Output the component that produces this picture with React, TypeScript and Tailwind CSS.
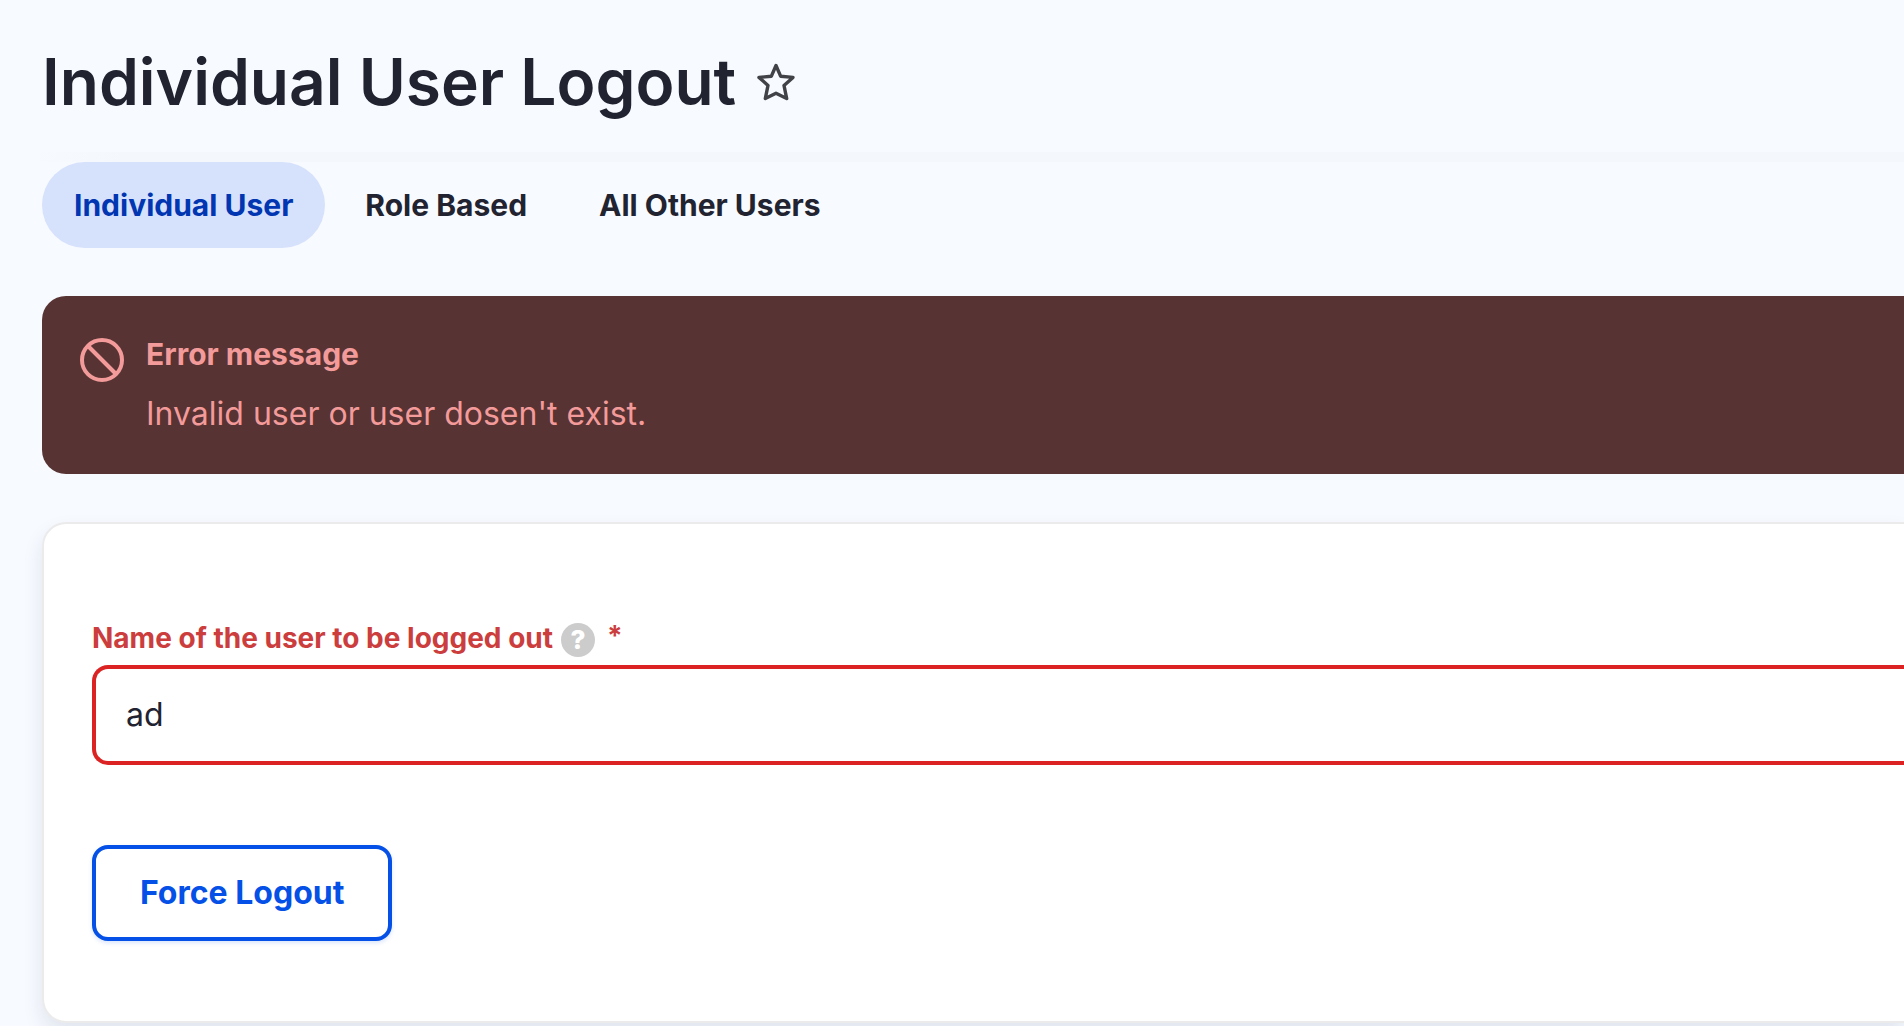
import React from "react";

const tabs = ["Individual User", "Role Based", "All Other Users"];

function StarIcon() {
  return (
    <svg viewBox="0 0 40 40" className="size-10" fill="none" stroke="#414247" strokeWidth="3.4" strokeLinejoin="round" aria-hidden="true">
      <path d="M20 3.5 L24.6 14.2 L37 15.4 L28 23.4 L30.7 36.6 L20 31.2 L9.3 36.6 L12 23.4 L3 15.4 L15.4 14.2 Z" />
    </svg>
  );
}

function ForbiddenIcon() {
  return (
    <svg viewBox="0 0 44 44" className="size-11 shrink-0" fill="none" stroke="#f39a9a" strokeWidth="4" aria-hidden="true">
      <circle cx="22" cy="22" r="20" />
      <path d="M8 8 L36 36" />
    </svg>
  );
}

export default function App() {
  return (
    <div className="min-h-screen overflow-hidden bg-[#f7faff] font-['Inter',sans-serif] text-[#222330]">
      <header className="flex h-[152px] items-center gap-5 pt-3 pl-[42px]">
        <h1 className="text-[64px] leading-[76px] font-semibold whitespace-nowrap">Individual User Logout</h1>
        <button type="button" aria-label="Add to favorites">
          <StarIcon />
        </button>
      </header>
      <div className="ml-8 h-[10px] bg-linear-to-r from-transparent to-[#f4f7fc] to-5%" />

      <div className="pl-[42px]">
        <nav aria-label="Tabs" className="flex gap-2">
          {tabs.map((tab, i) => (
            <a
              key={tab}
              href="#"
              aria-current={i === 0 ? "page" : undefined}
              className={
                "flex h-[86px] items-center rounded-full px-8 text-[30px] font-bold whitespace-nowrap " +
                (i === 0 ? "bg-[#d6e1fc] text-[#0036b1]" : "")
              }
            >
              {tab}
            </a>
          ))}
        </nav>

        <section role="alert" className="mt-12 flex items-start gap-[22px] rounded-l-3xl bg-[#573333] pt-9 pb-[38px] pl-[38px] text-[#f39a9a]">
          <div className="pt-[6px]">
            <ForbiddenIcon />
          </div>
          <div>
            <h2 className="text-[30px] leading-[44px] font-bold">Error message</h2>
            <p className="mt-4 text-[32px] leading-[44px]">Invalid user or user dosen't exist.</p>
          </div>
        </section>

        <form
          onSubmit={(e) => e.preventDefault()}
          className="mt-12 rounded-l-3xl border-2 border-r-0 border-[#ebebec] bg-white pt-[92px] pb-20 pl-12 shadow-[0_10px_20px_rgba(30,40,80,0.1)]"
        >
          <div className="flex h-[49px] items-start text-[28px] leading-[44px] font-bold text-[#cc3d3d]">
            <label htmlFor="username">Name of the user to be logged out</label>
            <button
              type="button"
              aria-label="Help"
              className="mt-[7px] ml-2 flex size-[34px] items-center justify-center rounded-full bg-[#cccccc] text-[26px] leading-none font-extrabold text-white"
            >
              ?
            </button>
            <span className="ml-3 leading-[40px]">*</span>
          </div>
          <input
            id="username"
            type="text"
            required
            defaultValue="ad"
            className="block h-[100px] w-full rounded-l-2xl border-4 border-r-0 border-[#dc2323] bg-white px-[30px] pb-[2px] text-[32px] outline-none"
          />
          <button
            type="submit"
            className="mt-20 block h-24 rounded-2xl border-4 border-[#0550e6] bg-white px-11 text-[32px] font-bold text-[#0550e6] shadow-[0_2px_4px_rgba(5,80,230,0.15)]"
          >
            Force Logout
          </button>
        </form>
      </div>
    </div>
  );
}
